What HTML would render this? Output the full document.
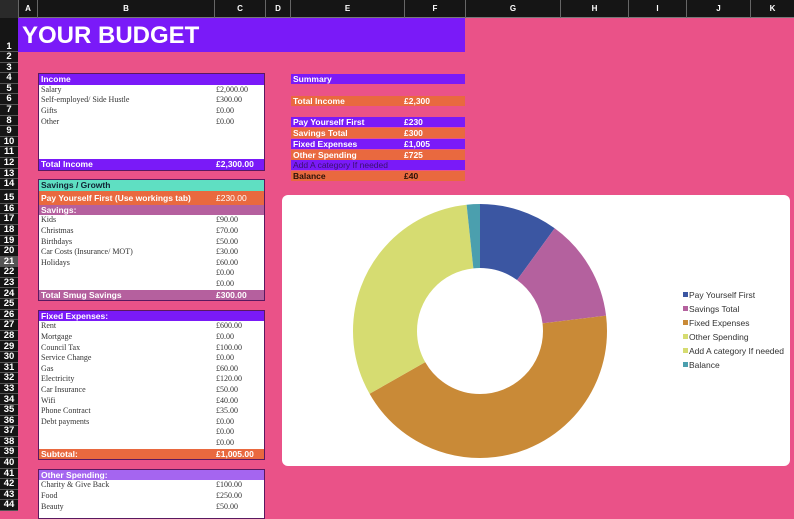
<!DOCTYPE html>
<html><head><meta charset="utf-8"><style>
*{margin:0;padding:0;box-sizing:border-box}
body{width:794px;height:510px;overflow:hidden;background:#ea5288;position:relative;font-family:"Liberation Sans",sans-serif}
.colh{position:absolute;top:0;left:0;width:794px;height:18px;background:#151515;border-bottom:1px solid #777}
.colh div{position:absolute;top:0;height:18px;border-left:1px solid #666;color:#fff;font-weight:bold;font-size:8px;text-align:center;line-height:18px}
.rowh{position:absolute;left:0;top:18px;width:18px;background:#151515}
.rowh div{border-bottom:1px solid #555;color:#fff;font-weight:bold;font-size:9.5px;text-align:center;display:flex;align-items:flex-end;justify-content:center;line-height:1}
.p{position:absolute;left:38px;width:227px;border:1px solid #5a1860;background:#fff}
.r{height:10.6px;display:flex;font-size:8px;line-height:10.6px;font-family:"Liberation Serif",serif;color:#333;padding-left:2px}
.r span:first-child{width:175px}
.h{font-family:"Liberation Sans",sans-serif;font-weight:bold;color:#fff;font-size:8.5px}
.s{position:absolute;left:291px;width:174px;height:10px;font-size:8.5px;font-weight:bold;color:#fff;line-height:10px;padding-left:2px;display:flex}
.s span:first-child{width:111px}
</style></head><body>
<div class="colh">
<div style="left:0;width:18px;border:none;background:#2a2a2a"></div>
<div style="left:18px;width:19px">A</div>
<div style="left:37px;width:177px">B</div>
<div style="left:214px;width:51px">C</div>
<div style="left:265px;width:25px">D</div>
<div style="left:290px;width:114px">E</div>
<div style="left:404px;width:61px">F</div>
<div style="left:465px;width:95px">G</div>
<div style="left:560px;width:68px">H</div>
<div style="left:628px;width:58px">I</div>
<div style="left:686px;width:64px">J</div>
<div style="left:750px;width:44px">K</div>
</div>
<div class="rowh">
<div style="height:34px">1</div>
<div style="height:10.6px">2</div><div style="height:10.6px">3</div><div style="height:10.6px">4</div><div style="height:10.6px">5</div><div style="height:10.6px">6</div><div style="height:10.6px">7</div><div style="height:10.6px">8</div><div style="height:10.6px">9</div><div style="height:10.6px">10</div><div style="height:10.6px">11</div><div style="height:10.6px">12</div><div style="height:10.6px">13</div><div style="height:10.6px">14</div>
<div style="height:14px">15</div>
<div style="height:10.6px">16</div><div style="height:10.6px">17</div><div style="height:10.6px">18</div><div style="height:10.6px">19</div><div style="height:10.6px">20</div><div style="height:10.6px;background:#555">21</div><div style="height:10.6px">22</div><div style="height:10.6px">23</div><div style="height:10.6px">24</div><div style="height:10.6px">25</div><div style="height:10.6px">26</div><div style="height:10.6px">27</div><div style="height:10.6px">28</div><div style="height:10.6px">29</div><div style="height:10.6px">30</div><div style="height:10.6px">31</div><div style="height:10.6px">32</div><div style="height:10.6px">33</div><div style="height:10.6px">34</div><div style="height:10.6px">35</div><div style="height:10.6px">36</div><div style="height:10.6px">37</div><div style="height:10.6px">38</div><div style="height:10.6px">39</div><div style="height:10.6px">40</div><div style="height:10.6px">41</div><div style="height:10.6px">42</div><div style="height:10.6px">43</div><div style="height:10.6px">44</div>
</div>
<div style="position:absolute;left:18px;top:18px;width:447px;height:34px;background:#7a1af8;color:#fff;font-weight:bold;font-size:24px;line-height:36px;padding-left:4px">YOUR BUDGET</div>

<div class="p" style="top:73.2px">
<div class="r h" style="background:#7a1af8"><span>Income</span></div>
<div class="r"><span>Salary</span><span>£2,000.00</span></div>
<div class="r"><span>Self-employed/ Side Hustle</span><span>£300.00</span></div>
<div class="r"><span>Gifts</span><span>£0.00</span></div>
<div class="r"><span>Other</span><span>£0.00</span></div>
<div class="r"></div><div class="r"></div><div class="r"></div>
<div class="r h" style="background:#7a1af8"><span>Total Income</span><span>£2,300.00</span></div>
</div>

<div class="p" style="top:179.2px">
<div class="r h" style="background:#5fdfc2;color:#123"><span>Savings / Growth</span></div>
<div class="r h" style="background:#e9693f;height:14px;line-height:14px"><span>Pay Yourself First (Use workings tab)</span><span style="font-weight:normal">£230.00</span></div>
<div class="r h" style="background:#b5609e"><span>Savings:</span></div>
<div class="r"><span>Kids</span><span>£90.00</span></div>
<div class="r"><span>Christmas</span><span>£70.00</span></div>
<div class="r"><span>Birthdays</span><span>£50.00</span></div>
<div class="r"><span>Car Costs (Insurance/ MOT)</span><span>£30.00</span></div>
<div class="r"><span>Holidays</span><span>£60.00</span></div>
<div class="r"><span></span><span>£0.00</span></div>
<div class="r"><span></span><span>£0.00</span></div>
<div class="r h" style="background:#b5609e"><span>Total Smug Savings</span><span>£300.00</span></div>
</div>

<div class="p" style="top:309.8px">
<div class="r h" style="background:#7a1af8"><span>Fixed Expenses:</span></div>
<div class="r"><span>Rent</span><span>£600.00</span></div>
<div class="r"><span>Mortgage</span><span>£0.00</span></div>
<div class="r"><span>Council Tax</span><span>£100.00</span></div>
<div class="r"><span>Service Change</span><span>£0.00</span></div>
<div class="r"><span>Gas</span><span>£60.00</span></div>
<div class="r"><span>Electricity</span><span>£120.00</span></div>
<div class="r"><span>Car Insurance</span><span>£50.00</span></div>
<div class="r"><span>Wifi</span><span>£40.00</span></div>
<div class="r"><span>Phone Contract</span><span>£35.00</span></div>
<div class="r"><span>Debt payments</span><span>£0.00</span></div>
<div class="r"><span></span><span>£0.00</span></div>
<div class="r"><span></span><span>£0.00</span></div>
<div class="r h" style="background:#e9693f"><span>Subtotal:</span><span>£1,005.00</span></div>
</div>

<div class="p" style="top:468.8px;height:50px">
<div class="r h" style="background:#a565f0"><span>Other Spending:</span></div>
<div class="r"><span>Charity &amp; Give Back</span><span>£100.00</span></div>
<div class="r"><span>Food</span><span>£250.00</span></div>
<div class="r"><span>Beauty</span><span>£50.00</span></div>
</div>

<div class="s" style="top:74px;background:#7a1af8"><span>Summary</span></div>
<div class="s" style="top:96px;background:#e9693f"><span>Total Income</span><span>£2,300</span></div>
<div class="s" style="top:117px;background:#7a1af8"><span>Pay Yourself First</span><span>£230</span></div>
<div class="s" style="top:128px;background:#e9693f"><span>Savings Total</span><span>£300</span></div>
<div class="s" style="top:138.5px;background:#7a1af8"><span>Fixed Expenses</span><span>£1,005</span></div>
<div class="s" style="top:149.5px;background:#e9693f"><span>Other Spending</span><span>£725</span></div>
<div class="s" style="top:160px;background:#7a1af8;color:#3a1070;font-weight:normal"><span>Add A category If needed</span></div>
<div class="s" style="top:170.5px;background:#e9693f;color:#2a1208"><span>Balance</span><span>£40</span></div>

<div style="position:absolute;left:282px;top:195px;width:508px;height:271px;background:#fff;border-radius:6px"></div>
<svg style="position:absolute;left:0;top:0" width="794" height="510">
<g transform="rotate(-90 480 331)" fill="none" stroke-width="64">
<circle cx="480" cy="331" r="95" stroke="#3b56a2" stroke-dasharray="59.7 600"/>
<circle cx="480" cy="331" r="95" stroke="#b4619e" stroke-dasharray="0 59.7 77.9 600"/>
<circle cx="480" cy="331" r="95" stroke="#c98a37" stroke-dasharray="0 137.6 260.8 600"/>
<circle cx="480" cy="331" r="95" stroke="#d6dc71" stroke-dasharray="0 398.4 188.2 600"/>
<circle cx="480" cy="331" r="95" stroke="#4b9fae" stroke-dasharray="0 586.6 10.4 600"/>
</g>
<g font-family="Liberation Sans,sans-serif" font-size="8.5" fill="#333">
<rect x="683" y="292" width="5" height="5" fill="#3b56a2"/><text x="689" y="298">Pay Yourself First</text>
<rect x="683" y="306" width="5" height="5" fill="#b4619e"/><text x="689" y="312">Savings Total</text>
<rect x="683" y="320" width="5" height="5" fill="#c98a37"/><text x="689" y="326">Fixed Expenses</text>
<rect x="683" y="334" width="5" height="5" fill="#d6dc71"/><text x="689" y="340">Other Spending</text>
<rect x="683" y="348" width="5" height="5" fill="#d6dc71"/><text x="689" y="354">Add A category If needed</text>
<rect x="683" y="362" width="5" height="5" fill="#4b9fae"/><text x="689" y="368">Balance</text>
</g>
</svg>
</body></html>
